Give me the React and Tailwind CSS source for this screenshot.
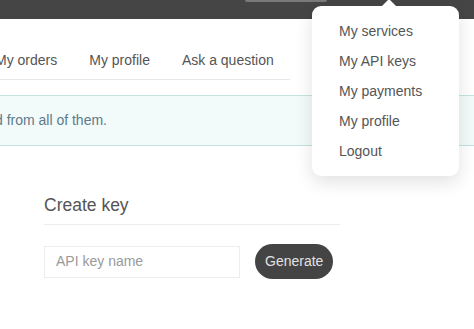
import React from 'react';

const menu = ['My services', 'My API keys', 'My payments', 'My profile', 'Logout'];
const tabs = ['My orders', 'My profile', 'Ask a question'];

const App = () => (
  <div className="relative w-[474px] h-[329px] overflow-hidden bg-white text-[14px] text-[#555]" style={{ fontFamily: '"Liberation Sans", Arial, sans-serif' }}>
    {/* Top bar */}
    <div className="h-[19px] bg-[#454545] flex">
      <div className="ml-[245px] w-[82px] h-[2px] bg-[#7a7a7a] rounded-b" />
    </div>

    {/* Tabs */}
    <div className="mt-[29px] ml-[-21px] flex w-max border-b border-[#e6e6e6] pb-[7px]">
      {tabs.map((t) => (
        <span key={t} className="px-4 leading-[24px]">{t}</span>
      ))}
    </div>

    {/* Alert */}
    <div className="mt-[15px] h-[51px] border-t border-b border-t-[#c2e5df] border-b-[#c2e5df] bg-[#f3fafa] flex items-center overflow-hidden">
      <div className="w-[107px] flex justify-end shrink-0">
        <span className="whitespace-nowrap text-[#5c7c8c]">Each key is billed separately, so usage is charged from all of them.</span>
      </div>
    </div>

    {/* Create key */}
    <div className="ml-[44px] mt-[46px] w-[296px]">
      <h3 className="text-[17.5px] leading-[26px] text-[#555] pb-[6px] border-b border-[#ececec]">Create key</h3>
      <div className="mt-[19px] flex items-center">
        <div className="w-[196px] h-[32px] border border-[#ededed] flex items-center pl-[11px] text-[#9a9a9a]">API key name</div>
        <button className="ml-[15px] h-[35px] px-[10px] rounded-full bg-[#444] text-[#e2e2e2]">Generate</button>
      </div>
    </div>

    {/* Dropdown */}
    <div className="absolute left-[312px] top-[6px] w-[147px] h-[170px] bg-white rounded-[9px] shadow-[0_6px_18px_rgba(0,0,0,0.12)]">
      <div className="absolute left-[69px] top-[-7px] w-0 h-0 border-l-[8px] border-r-[8px] border-b-[8px] border-l-transparent border-r-transparent border-b-white" />
      <div className="pl-[27px] pt-[10px] flex flex-col">
        {menu.map((m) => (
          <span key={m} className="leading-[30px]">{m}</span>
        ))}
      </div>
    </div>
  </div>
);

export default App;
